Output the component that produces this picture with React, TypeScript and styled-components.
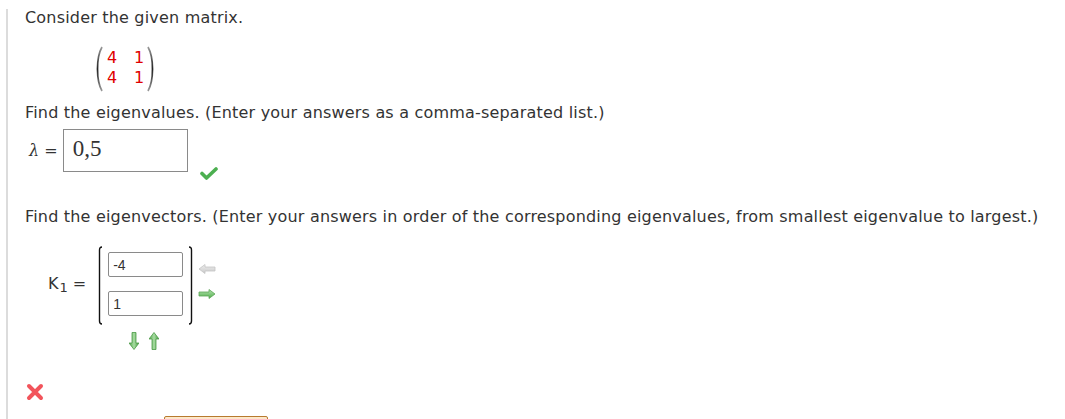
import React from 'react';
import styled, { createGlobalStyle } from 'styled-components';

const GlobalStyle = createGlobalStyle`
  html, body {
    margin: 0;
    padding: 0;
    background: #fff;
  }
  body {
    font-family: "DejaVu Sans", Verdana, sans-serif;
    color: #333;
    overflow: hidden;
  }
`;

const Page = styled.div`
  height: 419px;
  margin-left: 6px;
  border-left: 2px solid #dcdcdc;
  padding-left: 17px;
  box-sizing: border-box;
`;

const Prompt = styled.p<{ $top: number }>`
  margin: ${(p) => p.$top}px 0 0 0;
  font-size: 16px;
  letter-spacing: 0.19px;
  line-height: 18px;
  white-space: nowrap;
`;

const MatrixRow = styled.div`
  display: flex;
  margin: 19px 0 0 70px;
  height: 46px;
  align-items: center;
`;

const NumGrid = styled.div`
  display: grid;
  grid-template-columns: repeat(2, 10px);
  column-gap: 17px;
  row-gap: 1px;
  padding: 0 3px 4px 4px;
  font-size: 16px;
  line-height: 19px;
  color: #e00000;
`;

const AnswerRow = styled.div`
  display: flex;
  align-items: center;
  margin: 6px 0 0 4px;
  height: 44px;
`;

const MathLabel = styled.span`
  font-family: "DejaVu Serif", "Liberation Serif", serif;
  font-size: 16px;
  color: #333;
  margin-right: 5px;
  white-space: nowrap;
`;

const ValueBox = styled.div`
  width: 125px;
  height: 43px;
  border: 1px solid #8a8a8a;
  box-sizing: border-box;
  display: flex;
  align-items: center;
  padding: 0 0 3px 9px;
  font-family: "Liberation Serif", "DejaVu Serif", serif;
  font-size: 23px;
  color: #333;
`;

const Mark = styled.span`
  display: inline-flex;
  align-self: flex-end;
  margin: 0 0 -8px 12px;
`;

const VectorRow = styled.div`
  display: flex;
  align-items: flex-start;
  margin: 20px 0 0 0;
`;

const VecLabel = styled.div`
  font-size: 16px;
  margin: 28px 12px 0 23px;
  white-space: nowrap;
  display: flex;
  align-items: baseline;
`;

const Sub = styled.span`
  font-size: 13px;
  position: relative;
  top: 3px;
  margin: 0 5px 0 1px;
`;

const VectorColumn = styled.div`
  display: flex;
  flex-direction: column;
  align-items: center;
`;

const Bracketed = styled.div`
  display: flex;
  align-items: stretch;
  height: 79px;
`;

const Cells = styled.div`
  display: flex;
  flex-direction: column;
  gap: 14px;
  padding: 6px 5px 0 5px;
`;

const Cell = styled.div`
  width: 75px;
  height: 25px;
  border: 1px solid #8a8a8a;
  border-radius: 2px;
  box-sizing: border-box;
  font-family: "Liberation Sans", Arial, sans-serif;
  font-size: 14px;
  line-height: 16px;
  color: #333;
  padding: 4px 0 0 4px;
`;

const SideArrows = styled.div`
  display: flex;
  flex-direction: column;
  gap: 15px;
  margin: 18px 0 0 5px;
`;

const UpDown = styled.div`
  display: flex;
  gap: 10px;
  margin: 7px 0 0 -4px;
`;

const WrongMark = styled.div`
  margin: 33px 0 0 1px;
  height: 18px;
`;

const SubmitButton = styled.div`
  margin: 15px 0 0 139px;
  width: 104px;
  height: 20px;
  border: 1px solid #b87a2e;
  border-radius: 2px;
  background: linear-gradient(#fde9cc, #f7d29c);
  box-sizing: border-box;
`;

function Paren({ side, h }: { side: 'l' | 'r'; h: number }) {
  const d =
    side === 'l'
      ? `M7 1 C1 ${h * 0.25} 1 ${h * 0.75} 7 ${h - 1}`
      : `M1 1 C7 ${h * 0.25} 7 ${h * 0.75} 1 ${h - 1}`;
  return (
    <svg width="8" height={h} viewBox={`0 0 8 ${h}`}>
      <defs>
        <linearGradient id={`pg${side}`} x1="0" y1="0" x2="0" y2="1">
          <stop offset="0" stopColor="#999" />
          <stop offset="0.5" stopColor="#222" />
          <stop offset="1" stopColor="#999" />
        </linearGradient>
      </defs>
      <path d={d} fill="none" stroke={`url(#pg${side})`} strokeWidth="1.7" />
    </svg>
  );
}

function Bracket({ side, h }: { side: 'l' | 'r'; h: number }) {
  const d =
    side === 'l'
      ? `M4 1 Q1.5 1 1.5 4 L1.5 ${h - 4} Q1.5 ${h - 1} 4 ${h - 1}`
      : `M1 1 Q3.5 1 3.5 4 L3.5 ${h - 4} Q3.5 ${h - 1} 1 ${h - 1}`;
  return (
    <svg width="5" height={h} viewBox={`0 0 5 ${h}`}>
      <path d={d} fill="none" stroke="#111" strokeWidth="1.4" />
    </svg>
  );
}

function HArrow({ dir, active }: { dir: 'l' | 'r'; active: boolean }) {
  const id = `ha${dir}`;
  const pts =
    dir === 'r'
      ? '1,3 11,3 11,0.5 17,5 11,9.5 11,7 1,7'
      : '17,3 7,3 7,0.5 1,5 7,9.5 7,7 17,7';
  return (
    <svg width="18" height="10" viewBox="0 0 18 10">
      <defs>
        <linearGradient id={id} x1="0" y1="0" x2="0" y2="1">
          <stop offset="0" stopColor={active ? '#b6e3b0' : '#eee'} />
          <stop offset="1" stopColor={active ? '#4fae4a' : '#c9c9c9'} />
        </linearGradient>
      </defs>
      <polygon points={pts} fill={`url(#${id})`} stroke={active ? '#5aa455' : '#c4c4c4'} strokeWidth="0.8" />
    </svg>
  );
}

function VArrow({ dir }: { dir: 'u' | 'd' }) {
  const id = `va${dir}`;
  const pts =
    dir === 'd'
      ? '3,0.5 7,0.5 7,11 10,11 5,17.5 0,11 3,11'
      : '3,17.5 7,17.5 7,7 10,7 5,0.5 0,7 3,7';
  return (
    <svg width="10" height="18" viewBox="0 0 10 18">
      <defs>
        <linearGradient id={id} x1="0" y1="0" x2="1" y2="0">
          <stop offset="0" stopColor="#4fa64a" />
          <stop offset="0.5" stopColor="#a8dca2" />
          <stop offset="1" stopColor="#3f9a3b" />
        </linearGradient>
      </defs>
      <polygon points={pts} fill={`url(#${id})`} stroke="#4b9a47" strokeWidth="0.8" />
    </svg>
  );
}

function Check() {
  return (
    <svg width="18" height="13" viewBox="0 0 18 13">
      <path d="M2 6.5 L6.5 11 L16 2" fill="none" stroke="#4caf50" strokeWidth="3.6" strokeLinecap="round" strokeLinejoin="round" />
    </svg>
  );
}

function Cross() {
  return (
    <svg width="18" height="18" viewBox="0 0 18 18">
      <path d="M3 3 L15 15 M15 3 L3 15" fill="none" stroke="#f2545b" strokeWidth="4" strokeLinecap="round" />
    </svg>
  );
}

export default function App() {
  return (
    <>
      <GlobalStyle />
      <Page>
        <Prompt $top={9}>Consider the given matrix.</Prompt>
        <MatrixRow>
          <Paren side="l" h={46} />
          <NumGrid>
            <span>4</span>
            <span>1</span>
            <span>4</span>
            <span>1</span>
          </NumGrid>
          <Paren side="r" h={46} />
        </MatrixRow>
        <Prompt $top={12}>Find the eigenvalues. (Enter your answers as a comma-separated list.)</Prompt>
        <AnswerRow>
          <MathLabel>
            <i>λ</i> =
          </MathLabel>
          <ValueBox>0,5</ValueBox>
          <Mark>
            <Check />
          </Mark>
        </AnswerRow>
        <Prompt $top={36}>
          Find the eigenvectors. (Enter your answers in order of the corresponding eigenvalues, from smallest
          eigenvalue to largest.)
        </Prompt>
        <VectorRow>
          <VecLabel>
            K<Sub>1</Sub>=
          </VecLabel>
          <VectorColumn>
            <Bracketed>
              <Bracket side="l" h={79} />
              <Cells>
                <Cell>-4</Cell>
                <Cell>1</Cell>
              </Cells>
              <Bracket side="r" h={79} />
            </Bracketed>
            <UpDown>
              <VArrow dir="d" />
              <VArrow dir="u" />
            </UpDown>
          </VectorColumn>
          <SideArrows>
            <HArrow dir="l" active={false} />
            <HArrow dir="r" active={true} />
          </SideArrows>
        </VectorRow>
        <WrongMark>
          <Cross />
        </WrongMark>
        <SubmitButton />
      </Page>
    </>
  );
}
